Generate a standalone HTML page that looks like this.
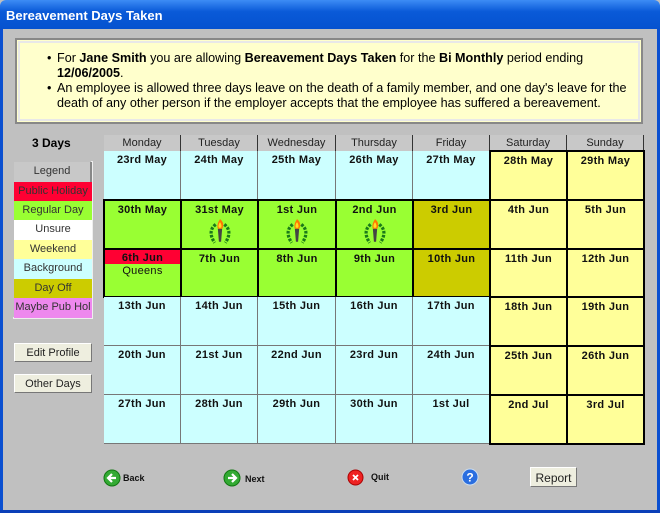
<!DOCTYPE html>
<html><head><meta charset="utf-8"><style>
*{margin:0;padding:0;box-sizing:border-box}
body{width:660px;height:513px;overflow:hidden;background:#c0c0c0;font-family:"Liberation Sans",Arial,sans-serif;position:relative}
.a{position:absolute}
.title{left:0;top:0;width:660px;height:29px;background:linear-gradient(#3d8cf5,#0a5ad8 40%,#0552cf);color:#fff;font-weight:bold;font-size:13px;padding:8px 0 0 6px;border-radius:6px 6px 0 0}
.fl{left:0;top:29px;width:3px;height:484px;background:#0a4fd0}
.fr{right:0;top:29px;width:3px;height:484px;background:#0a4fd0}
.fb{left:0;top:510px;width:660px;height:3px;background:#0a3fb8}
.info{left:15px;top:38px;width:628px;height:86px;border:2px solid #888;outline:2px solid #e8e8e8;outline-offset:-5px;background:#ffffcc;font-size:12.6px;line-height:15px;padding:11px 0 0 31px;color:#000;white-space:nowrap;overflow:hidden}
.info div{position:relative;padding-left:9px}
.info div:before{content:"•";position:absolute;left:-1px}
.hd{top:135px;height:16px;background:#c8c8c8;border-right:1px solid #333;font-size:11px;text-align:center;padding-top:2px;color:#222}
.c{font-size:11px;font-weight:bold;text-align:center;padding-top:3px;color:#111;letter-spacing:.3px}
.B{background:#ccffff;border-right:1px solid #777;border-bottom:1px solid #777}
.K{border:1px solid #000;outline:1px solid #000}
.Y{background:#ffff99}.G{background:#99ff33}.D{background:#cccc00}
.lg{left:14px;width:78px;font-size:11px;text-align:center;color:#333;padding-top:3px}
.btn{background:#eeeedf;border:1px solid #fff;border-right-color:#777;border-bottom-color:#777;font-size:11px;text-align:center;color:#222}
.nav{font-size:9px;font-weight:bold;color:#111}
</style></head><body>
<div class="a title">Bereavement Days Taken</div>
<div class="a fl"></div><div class="a fr"></div><div class="a fb"></div>
<div class="a info">
<div>For <b>Jane Smith</b> you are allowing <b>Bereavement Days Taken</b> for the <b>Bi Monthly</b> period ending<br><b>12/06/2005</b>.</div>
<div>An employee is allowed three days leave on the death of a family member, and one day's leave for the<br>death of any other person if the employer accepts that the employee has suffered a bereavement.</div>
</div>
<div class="a" style="left:32px;top:136px;font-weight:bold;font-size:12px">3 Days</div>
<div class="a" style="left:13px;top:161px;width:80px;height:158px;border-right:2px solid #eee;border-bottom:2px solid #eee"></div>
<div class="a lg" style="top:162px;height:20px;background:#c8c8c8;border-right:2px solid #888">Legend</div>
<div class="a lg" style="top:182px;height:19px;background:#ff0033">Public Holiday</div>
<div class="a lg" style="top:201px;height:19px;background:#99ff33">Regular Day</div>
<div class="a lg" style="top:220px;height:20px;background:#fff">Unsure</div>
<div class="a lg" style="top:240px;height:19px;background:#ffff99">Weekend</div>
<div class="a lg" style="top:259px;height:20px;background:#ccffff">Background</div>
<div class="a lg" style="top:279px;height:19px;background:#cccc00">Day Off</div>
<div class="a lg" style="top:298px;height:20px;background:#ee88ee">Maybe Pub Hol</div>
<div class="a btn" style="left:14px;top:343px;width:78px;height:19px;padding-top:3px">Edit Profile</div>
<div class="a btn" style="left:14px;top:374px;width:78px;height:19px;padding-top:3px">Other Days</div>
<div id="g"></div>
<div class="a" style="left:103px;top:469px"><svg width="18" height="18"><circle cx="9" cy="9" r="8" fill="#3a3" stroke="#171" /><path d="M13 9H6M9 5L5 9L9 13" stroke="#fff" stroke-width="2.2" fill="none"/></svg></div>
<div class="a nav" style="left:123px;top:473px">Back</div>
<div class="a" style="left:223px;top:469px"><svg width="18" height="18"><circle cx="9" cy="9" r="8" fill="#3a3" stroke="#171"/><path d="M5 9H12M9 5L13 9L9 13" stroke="#fff" stroke-width="2.2" fill="none"/></svg></div>
<div class="a nav" style="left:245px;top:474px">Next</div>
<div class="a" style="left:347px;top:469px"><svg width="17" height="17"><circle cx="8.5" cy="8.5" r="7.5" fill="#e22" stroke="#a00"/><path d="M6 6L11 11M11 6L6 11" stroke="#fff" stroke-width="1.8"/></svg></div>
<div class="a nav" style="left:371px;top:472px">Quit</div>
<div class="a" style="left:461px;top:468px"><svg width="18" height="18"><circle cx="9" cy="9" r="8" fill="#2a6ee0" stroke="#cde"/><text x="9" y="13.5" font-size="12" font-weight="bold" fill="#fff" text-anchor="middle" font-family="Liberation Sans">?</text></svg></div>
<div class="a btn" style="left:530px;top:467px;width:47px;height:20px;font-size:12px;padding-top:3px">Report</div>
<script>
var xs=[104,181,258,336,413,490,567,644],ys=[151,200,249,297,346,395,444];
var days=["Monday","Tuesday","Wednesday","Thursday","Friday","Saturday","Sunday"];
var lab=[["23rd May","24th May","25th May","26th May","27th May","28th May","29th May"],
["30th May","31st May","1st Jun","2nd Jun","3rd Jun","4th Jun","5th Jun"],
["6th Jun","7th Jun","8th Jun","9th Jun","10th Jun","11th Jun","12th Jun"],
["13th Jun","14th Jun","15th Jun","16th Jun","17th Jun","18th Jun","19th Jun"],
["20th Jun","21st Jun","22nd Jun","23rd Jun","24th Jun","25th Jun","26th Jun"],
["27th Jun","28th Jun","29th Jun","30th Jun","1st Jul","2nd Jul","3rd Jul"]];
var torch='<svg width="28" height="26" viewBox="0 0 26 24" style="display:block;margin:3px auto 0"><g fill="none" stroke="#1a7a1a" stroke-width="3" stroke-dasharray="2.5 1.2"><path d="M9 5Q1 11 8 22"/><path d="M17 5Q25 11 18 22"/></g><path d="M11 9h4l-1 12h-2z" fill="#444"/><path d="M13 0c3 2 4 6 2 9h-4c-1-3 0-6 2-9z" fill="#f70"/><path d="M13 3c1 1 2 4 1 5h-2c-1-1 0-4 1-5z" fill="#fd2"/></svg>';
var h='';
for(var i=0;i<7;i++)h+='<div class="a hd" style="left:'+xs[i]+'px;width:'+(xs[i+1]-xs[i])+'px">'+days[i]+'</div>';
for(var r=0;r<6;r++)for(var c=0;c<7;c++){
 var cls='B';
 if(c>=5)cls='Y K';else if(r==1||r==2)cls=(c==4?'D K':'G K');
 var inner=lab[r][c];
 if(r==2&&c==0)inner='<div style="background:#ff0033;margin:-3px 0 0;padding-top:2px;height:14px">6th Jun</div><div style="font-weight:normal;padding-top:1px">Queens</div>';
 if(r==1&&c>=1&&c<=3)inner+=torch;
 h+='<div class="a c '+cls+'" style="left:'+xs[c]+'px;top:'+ys[r]+'px;width:'+(xs[c+1]-xs[c])+'px;height:'+(ys[r+1]-ys[r])+'px">'+inner+'</div>';
}
document.getElementById('g').innerHTML=h;
</script>
</body></html>
